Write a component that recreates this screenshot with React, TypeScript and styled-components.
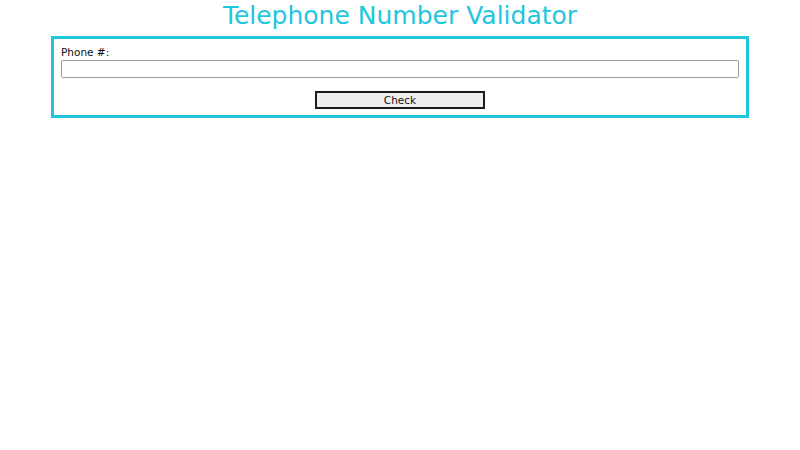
import React from "react";
import styled, { createGlobalStyle } from "styled-components";

const Global = createGlobalStyle`
  html, body { margin: 0; padding: 0; background: #ffffff; }
  body { font-family: "DejaVu Sans", sans-serif; color: #111; }
  * { box-sizing: border-box; }
`;

const Page = styled.main`
  display: flex;
  flex-direction: column;
  align-items: center;
`;

const Title = styled.h1`
  margin: 0;
  height: 33px;
  line-height: 31px;
  font-size: 25px;
  font-weight: normal;
  color: #1fc6de;
`;

const Form = styled.form`
  width: 698px;
  margin-top: 3px;
  border: 3px solid #1fc6de;
  padding: 5px 7px 6px;
  display: flex;
  flex-direction: column;
`;

const Label = styled.label`
  font-size: 10.5px;
  line-height: 16px;
  color: #111;
`;

const Input = styled.input`
  height: 18px;
  width: 100%;
  border: 1px solid #9a9a9a;
  border-radius: 2px;
  padding: 0 4px;
  font-family: "DejaVu Sans", sans-serif;
  font-size: 10px;
  outline: none;
`;

const Button = styled.button`
  align-self: center;
  margin-top: 13px;
  width: 170px;
  height: 18px;
  border: 2px solid #1a1a1a;
  background: #efefef;
  font-family: "DejaVu Sans", sans-serif;
  font-size: 10.5px;
  color: #111;
  padding: 0;
  line-height: 14px;
`;

export default function App() {
  return (
    <>
      <Global />
      <Page>
        <Title>Telephone Number Validator</Title>
        <Form onSubmit={(e) => e.preventDefault()}>
          <Label htmlFor="phone">Phone #:</Label>
          <Input id="phone" type="text" />
          <Button type="submit">Check</Button>
        </Form>
      </Page>
    </>
  );
}
